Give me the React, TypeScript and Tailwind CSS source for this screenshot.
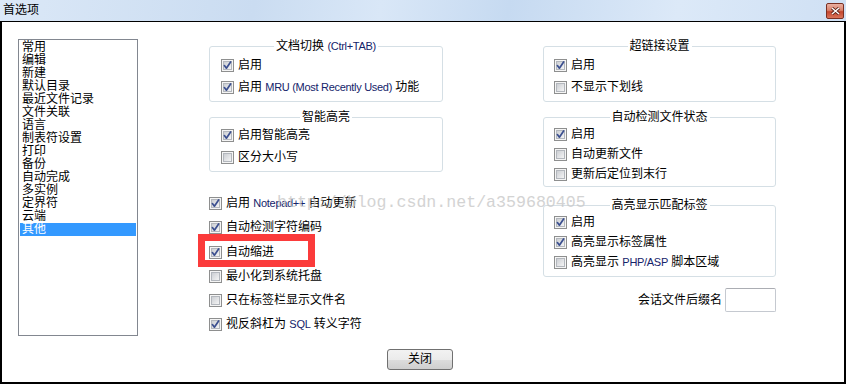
import type { ReactNode } from "react";

const items = [
  "常用",
  "编辑",
  "新建",
  "默认目录",
  "最近文件记录",
  "文件关联",
  "语言",
  "制表符设置",
  "打印",
  "备份",
  "自动完成",
  "多实例",
  "定界符",
  "云端",
  "其他",
];

const Box = ({ checked }: { checked: boolean }) => (
  <svg width="13" height="13" viewBox="0 0 13 13" className="shrink-0">
    <defs>
      <linearGradient id="cbfill" x1="0" y1="0" x2="1" y2="1">
        <stop offset="0" stopColor="#c9ccd1" />
        <stop offset="1" stopColor="#f7f7f7" />
      </linearGradient>
    </defs>
    <rect x="0.5" y="0.5" width="12" height="12" fill="#f5f5f5" stroke="#8e8f8f" />
    <rect x="2.5" y="2.5" width="8" height="8" fill="url(#cbfill)" stroke="#b3b7bd" />
    {checked && (
      <path
        d="M3.4 6.6 L5.4 9.2 L9.6 3"
        stroke="#3b4f8f"
        strokeWidth="1.7"
        fill="none"
        strokeLinecap="round"
        strokeLinejoin="round"
      />
    )}
  </svg>
);

const Latin = ({ children }: { children: ReactNode }) => (
  <span className="font-['Liberation_Sans',sans-serif] text-[11px] tracking-[-0.3px] text-[#14236a]">
    {children}
  </span>
);

const Check = ({ checked, children }: { checked: boolean; children: ReactNode }) => (
  <div className="flex h-[13px] items-center gap-[4px] whitespace-nowrap leading-[13px]">
    <Box checked={checked} />
    <span>{children}</span>
  </div>
);

type GroupProps = {
  title: ReactNode;
  className: string;
  children: ReactNode;
};

const Group = ({ title, className, children }: GroupProps) => (
  <div className={`relative flex flex-col rounded-[3px] border border-[#d5dfe5] ${className}`}>
    <span className="absolute left-1/2 top-[-7px] -translate-x-1/2 whitespace-nowrap bg-white px-[2px] leading-[13px]">
      {title}
    </span>
    {children}
  </div>
);

export default function App() {
  return (
    <div className="relative h-[384px] w-[846px] overflow-hidden bg-white font-['Liberation_Sans','Noto_Sans_CJK_SC',sans-serif] text-[12px] text-black">
      {/* 标题栏 */}
      <div className="flex h-[21px] items-center justify-between bg-[linear-gradient(100deg,#dbe8f7_0%,#cadcf1_30%,#d9e7f7_45%,#c6daf1_60%,#dce9f8_80%,#cfe0f4_100%)] pl-[3px] pr-[2px]">
        <span className="leading-[13px]">首选项</span>
        <div className="flex h-[16px] w-[18px] items-center justify-center rounded-[2px] border border-[#7a3023] bg-[linear-gradient(#eab0a2_0%,#d9826c_45%,#c4452d_55%,#d9745a_100%)]">
          <svg width="9" height="8" viewBox="0 0 9 8">
            <path d="M1 1 L8 7 M8 1 L1 7" stroke="#5a2218" strokeWidth="3" />
            <path d="M1 1 L8 7 M8 1 L1 7" stroke="#ffffff" strokeWidth="1.4" />
          </svg>
        </div>
      </div>

      {/* 内容 */}
      <div className="flex h-[363px] flex-col border-x-2 border-b-2 border-t border-black pl-[16px] pt-[17px]">
        <div className="flex h-[300px] items-start">
          <div className="flex h-[297px] w-[120px] flex-col border border-[#828790] pt-[1px]">
            {items.map((item) => (
              <div
                key={item}
                className={`mx-[1px] h-[13px] pl-[2px] leading-[13px] ${
                  item === "其他" ? "bg-[#3399ff] text-white" : ""
                }`}
              >
                {item}
              </div>
            ))}
          </div>

          <div className="ml-[71px] mt-[7px] flex w-[234px] flex-col">
            <Group
              title={
                <>
                  文档切换 <Latin>(Ctrl+TAB)</Latin>
                </>
              }
              className="gap-[9px] px-[11px] pb-[7px] pt-[12px]"
            >
              <Check checked>启用</Check>
              <Check checked>
                启用 <Latin>MRU (Most Recently Used)</Latin> 功能
              </Check>
            </Group>
            <Group title="智能高亮" className="mt-[15px] gap-[9px] px-[11px] pb-[7px] pt-[11px]">
              <Check checked>启用智能高亮</Check>
              <Check checked={false}>区分大小写</Check>
            </Group>
            <div className="mt-[25px] flex flex-col gap-[11.3px]">
              <Check checked>
                启用 <Latin>Notepad++</Latin> 自动更新
              </Check>
              <Check checked>自动检测字符编码</Check>
              <Check checked>自动缩进</Check>
              <Check checked={false}>最小化到系统托盘</Check>
              <Check checked={false}>只在标签栏显示文件名</Check>
              <Check checked>
                视反斜杠为 <Latin>SQL</Latin> 转义字符
              </Check>
            </div>
          </div>

          <div className="ml-[100px] mt-[7px] flex w-[233px] flex-col">
            <Group title="超链接设置" className="gap-[9px] px-[10px] pb-[7px] pt-[12px]">
              <Check checked>启用</Check>
              <Check checked={false}>不显示下划线</Check>
            </Group>
            <Group title="自动检测文件状态" className="mt-[15px] gap-[7px] px-[10px] pb-[5px] pt-[10px]">
              <Check checked>启用</Check>
              <Check checked={false}>自动更新文件</Check>
              <Check checked={false}>更新后定位到末行</Check>
            </Group>
            <Group title="高亮显示匹配标签" className="mt-[18px] gap-[7px] px-[10px] pb-[7px] pt-[10px]">
              <Check checked>启用</Check>
              <Check checked>高亮显示标签属性</Check>
              <Check checked={false}>
                高亮显示 <Latin>PHP/ASP</Latin> 脚本区域
              </Check>
            </Group>
            <div className="mt-[11px] flex items-center justify-end gap-[3px]">
              <span className="leading-[13px]">会话文件后缀名</span>
              <div className="h-[24px] w-[51px] rounded-[2px] border border-[#c5c9d0] border-t-[#abadb3]" />
            </div>
          </div>
        </div>

        <div className="ml-[369px] mt-[10px]">
          <button
            type="button"
            className="h-[21px] w-[66px] rounded-[3px] border border-[#707070] bg-[linear-gradient(#f2f2f2_0%,#ebebeb_50%,#dddddd_51%,#cfcfcf_100%)] leading-[13px]"
          >
            关闭
          </button>
        </div>
      </div>

      {/* 水印 */}
      <div className="pointer-events-none absolute left-[277px] top-[193px] font-['Liberation_Mono',monospace] text-[16.6px] leading-[20px] text-[#c9c9c9] opacity-80">
        http://blog.csdn.net/a359680405
      </div>

      {/* 红框标注 */}
      <div className="pointer-events-none absolute left-[198px] top-[234px] h-[33px] w-[117px] border-[7px] border-[#fb3b3b]" />
    </div>
  );
}
